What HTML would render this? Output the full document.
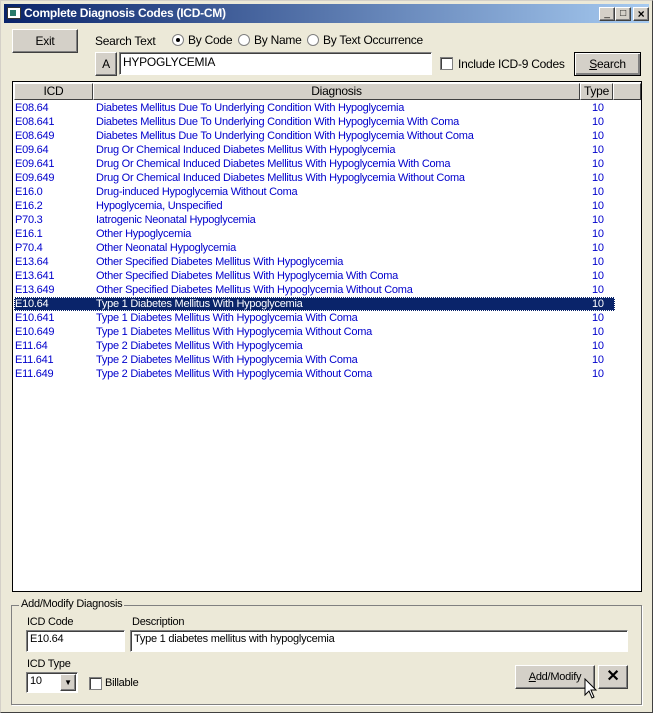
<html><head><style>
*{box-sizing:border-box;margin:0;padding:0}
body{width:653px;height:713px;background:#d4d0c8;font-family:"Liberation Sans",sans-serif;font-size:11px;position:relative;overflow:hidden;letter-spacing:-0.25px}
.win{position:absolute;left:0;top:0;width:653px;height:713px;border:1px solid;border-color:#d4d0c8 #404040 #404040 #d4d0c8;background:#ece9d8}
.title{position:absolute;left:3px;top:3px;width:645px;height:19px;background:linear-gradient(90deg,#0a246a,#a6caf0);color:#fff;font-weight:bold;font-size:12px;line-height:19px;padding-left:20px}
.a{position:absolute}
.btn{position:absolute;background:#d4d0c8;border:1px solid;border-color:#fff #404040 #404040 #fff;box-shadow:inset -1px -1px 0 #808080;text-align:center;font-size:12px}
.inp{position:absolute;background:#fff;border:1px solid;border-color:#808080 #fff #fff #808080;box-shadow:inset 1px 1px 0 #404040;font-size:12px;padding:2px 3px}
.rad{position:absolute;width:12px;height:12px;border-radius:50%;background:#fff;border:1px solid #808080}
.chk{position:absolute;width:13px;height:13px;background:#fff;border:1px solid #808080;box-shadow:inset 1px 1px 0 #404040}
.list{position:absolute;left:11px;top:80px;width:630px;height:511px;background:#fff;border:1px solid #000}
.hd{position:absolute;top:1px;height:17px;background:#d4d0c8;border:1px solid;border-color:#fff #404040 #404040 #fff;text-align:center;font-size:12px;line-height:15px}
.row{position:absolute;left:1px;width:601px;height:14px;color:#0000cc;font-size:11px;line-height:14px}
.row span{position:absolute}
.row .c1{left:1px}.row .c2{left:82px}.row .c3{left:578px}
.sel{background:#0a246a;color:#fff;outline:1px dotted #fff;outline-offset:-1px}
</style></head><body><div class="win">
<div class="title">Complete Diagnosis Codes (ICD-CM)</div>
<div class="a" style="left:6px;top:6px;width:14px;height:12px;background:#fff;border:1px solid #333"><div style="margin:2px;width:6px;height:6px;background:#2a7a6a"></div></div>
<div class="btn" style="left:598px;top:6px;width:16px;height:14px;font-size:10px;line-height:12px">_</div>
<div class="btn" style="left:614px;top:6px;width:16px;height:14px;font-size:10px;line-height:12px">□</div>
<div class="btn" style="left:632px;top:6px;width:16px;height:14px;font-size:12px;line-height:12px;font-weight:bold">×</div>
<div class="btn" style="left:11px;top:28px;width:66px;height:24px;line-height:22px">Exit</div>
<div class="a" style="left:94px;top:33px;font-size:12px">Search Text</div>
<div class="rad" style="left:171px;top:33px"><div style="margin:3px;width:4px;height:4px;background:#000;border-radius:50%"></div></div>
<div class="a" style="left:187px;top:32px;font-size:12px">By Code</div>
<div class="rad" style="left:237px;top:33px"></div>
<div class="a" style="left:253px;top:32px;font-size:12px">By Name</div>
<div class="rad" style="left:306px;top:33px"></div>
<div class="a" style="left:322px;top:32px;font-size:12px">By Text Occurrence</div>
<div class="btn" style="left:94px;top:51px;width:22px;height:24px;line-height:22px">A</div>
<div class="inp" style="left:118px;top:51px;width:313px;height:23px">HYPOGLYCEMIA</div>
<div class="chk" style="left:439px;top:56px"></div>
<div class="a" style="left:457px;top:56px;font-size:12px">Include ICD-9 Codes</div>
<div class="btn" style="left:573px;top:51px;width:67px;height:24px;line-height:22px;border-color:#000;box-shadow:inset 1px 1px 0 #fff,inset -2px -2px 0 #808080"><u>S</u>earch</div>
<div class="list">
<div class="hd" style="left:1px;width:79px">ICD</div>
<div class="hd" style="left:80px;width:487px">Diagnosis</div>
<div class="hd" style="left:567px;width:33px">Type</div>
<div class="hd" style="left:600px;width:28px"></div>
<div class="row" style="top:19px"><span class="c1">E08.64</span><span class="c2">Diabetes Mellitus Due To Underlying Condition With Hypoglycemia</span><span class="c3">10</span></div>
<div class="row" style="top:33px"><span class="c1">E08.641</span><span class="c2">Diabetes Mellitus Due To Underlying Condition With Hypoglycemia With Coma</span><span class="c3">10</span></div>
<div class="row" style="top:47px"><span class="c1">E08.649</span><span class="c2">Diabetes Mellitus Due To Underlying Condition With Hypoglycemia Without Coma</span><span class="c3">10</span></div>
<div class="row" style="top:61px"><span class="c1">E09.64</span><span class="c2">Drug Or Chemical Induced Diabetes Mellitus With Hypoglycemia</span><span class="c3">10</span></div>
<div class="row" style="top:75px"><span class="c1">E09.641</span><span class="c2">Drug Or Chemical Induced Diabetes Mellitus With Hypoglycemia With Coma</span><span class="c3">10</span></div>
<div class="row" style="top:89px"><span class="c1">E09.649</span><span class="c2">Drug Or Chemical Induced Diabetes Mellitus With Hypoglycemia Without Coma</span><span class="c3">10</span></div>
<div class="row" style="top:103px"><span class="c1">E16.0</span><span class="c2">Drug-induced Hypoglycemia Without Coma</span><span class="c3">10</span></div>
<div class="row" style="top:117px"><span class="c1">E16.2</span><span class="c2">Hypoglycemia, Unspecified</span><span class="c3">10</span></div>
<div class="row" style="top:131px"><span class="c1">P70.3</span><span class="c2">Iatrogenic Neonatal Hypoglycemia</span><span class="c3">10</span></div>
<div class="row" style="top:145px"><span class="c1">E16.1</span><span class="c2">Other Hypoglycemia</span><span class="c3">10</span></div>
<div class="row" style="top:159px"><span class="c1">P70.4</span><span class="c2">Other Neonatal Hypoglycemia</span><span class="c3">10</span></div>
<div class="row" style="top:173px"><span class="c1">E13.64</span><span class="c2">Other Specified Diabetes Mellitus With Hypoglycemia</span><span class="c3">10</span></div>
<div class="row" style="top:187px"><span class="c1">E13.641</span><span class="c2">Other Specified Diabetes Mellitus With Hypoglycemia With Coma</span><span class="c3">10</span></div>
<div class="row" style="top:201px"><span class="c1">E13.649</span><span class="c2">Other Specified Diabetes Mellitus With Hypoglycemia Without Coma</span><span class="c3">10</span></div>
<div class="row sel" style="top:215px"><span class="c1">E10.64</span><span class="c2">Type 1 Diabetes Mellitus With Hypoglycemia</span><span class="c3">10</span></div>
<div class="row" style="top:229px"><span class="c1">E10.641</span><span class="c2">Type 1 Diabetes Mellitus With Hypoglycemia With Coma</span><span class="c3">10</span></div>
<div class="row" style="top:243px"><span class="c1">E10.649</span><span class="c2">Type 1 Diabetes Mellitus With Hypoglycemia Without Coma</span><span class="c3">10</span></div>
<div class="row" style="top:257px"><span class="c1">E11.64</span><span class="c2">Type 2 Diabetes Mellitus With Hypoglycemia</span><span class="c3">10</span></div>
<div class="row" style="top:271px"><span class="c1">E11.641</span><span class="c2">Type 2 Diabetes Mellitus With Hypoglycemia With Coma</span><span class="c3">10</span></div>
<div class="row" style="top:285px"><span class="c1">E11.649</span><span class="c2">Type 2 Diabetes Mellitus With Hypoglycemia Without Coma</span><span class="c3">10</span></div>
</div>
<div class="a" style="left:10px;top:604px;width:631px;height:100px;border:1px solid #808080;box-shadow:1px 1px 0 #fff"></div>
<div class="a" style="left:18px;top:597px;background:#ece9d8;padding:0 2px;font-size:11px">Add/Modify Diagnosis</div>
<div class="a" style="left:26px;top:615px;font-size:11px">ICD Code</div>
<div class="a" style="left:131px;top:615px;font-size:11px">Description</div>
<div class="inp" style="left:25px;top:629px;width:99px;height:22px;font-size:11px">E10.64</div>
<div class="inp" style="left:129px;top:629px;width:498px;height:22px;font-size:11px">Type 1 diabetes mellitus with hypoglycemia</div>
<div class="a" style="left:26px;top:657px;font-size:11px">ICD Type</div>
<div class="inp" style="left:25px;top:671px;width:52px;height:21px;font-size:11px">10</div>
<div class="btn" style="left:59px;top:673px;width:16px;height:17px;font-size:8px;line-height:15px">▼</div>
<div class="chk" style="left:88px;top:676px"></div>
<div class="a" style="left:104px;top:676px;font-size:11px">Billable</div>
<div class="btn" style="left:514px;top:664px;width:80px;height:24px;line-height:22px;font-size:11px"><u>A</u>dd/Modify</div>
<div class="btn" style="left:597px;top:664px;width:30px;height:24px;line-height:22px;font-size:16px;font-weight:bold">✕</div>
<svg class="a" style="left:583px;top:677px" width="14" height="22"><path d="M1 1 L1 17 L5 13 L8 20 L10 19 L7 12 L12 12 Z" fill="#fff" stroke="#000"/></svg>
</div></body></html>
